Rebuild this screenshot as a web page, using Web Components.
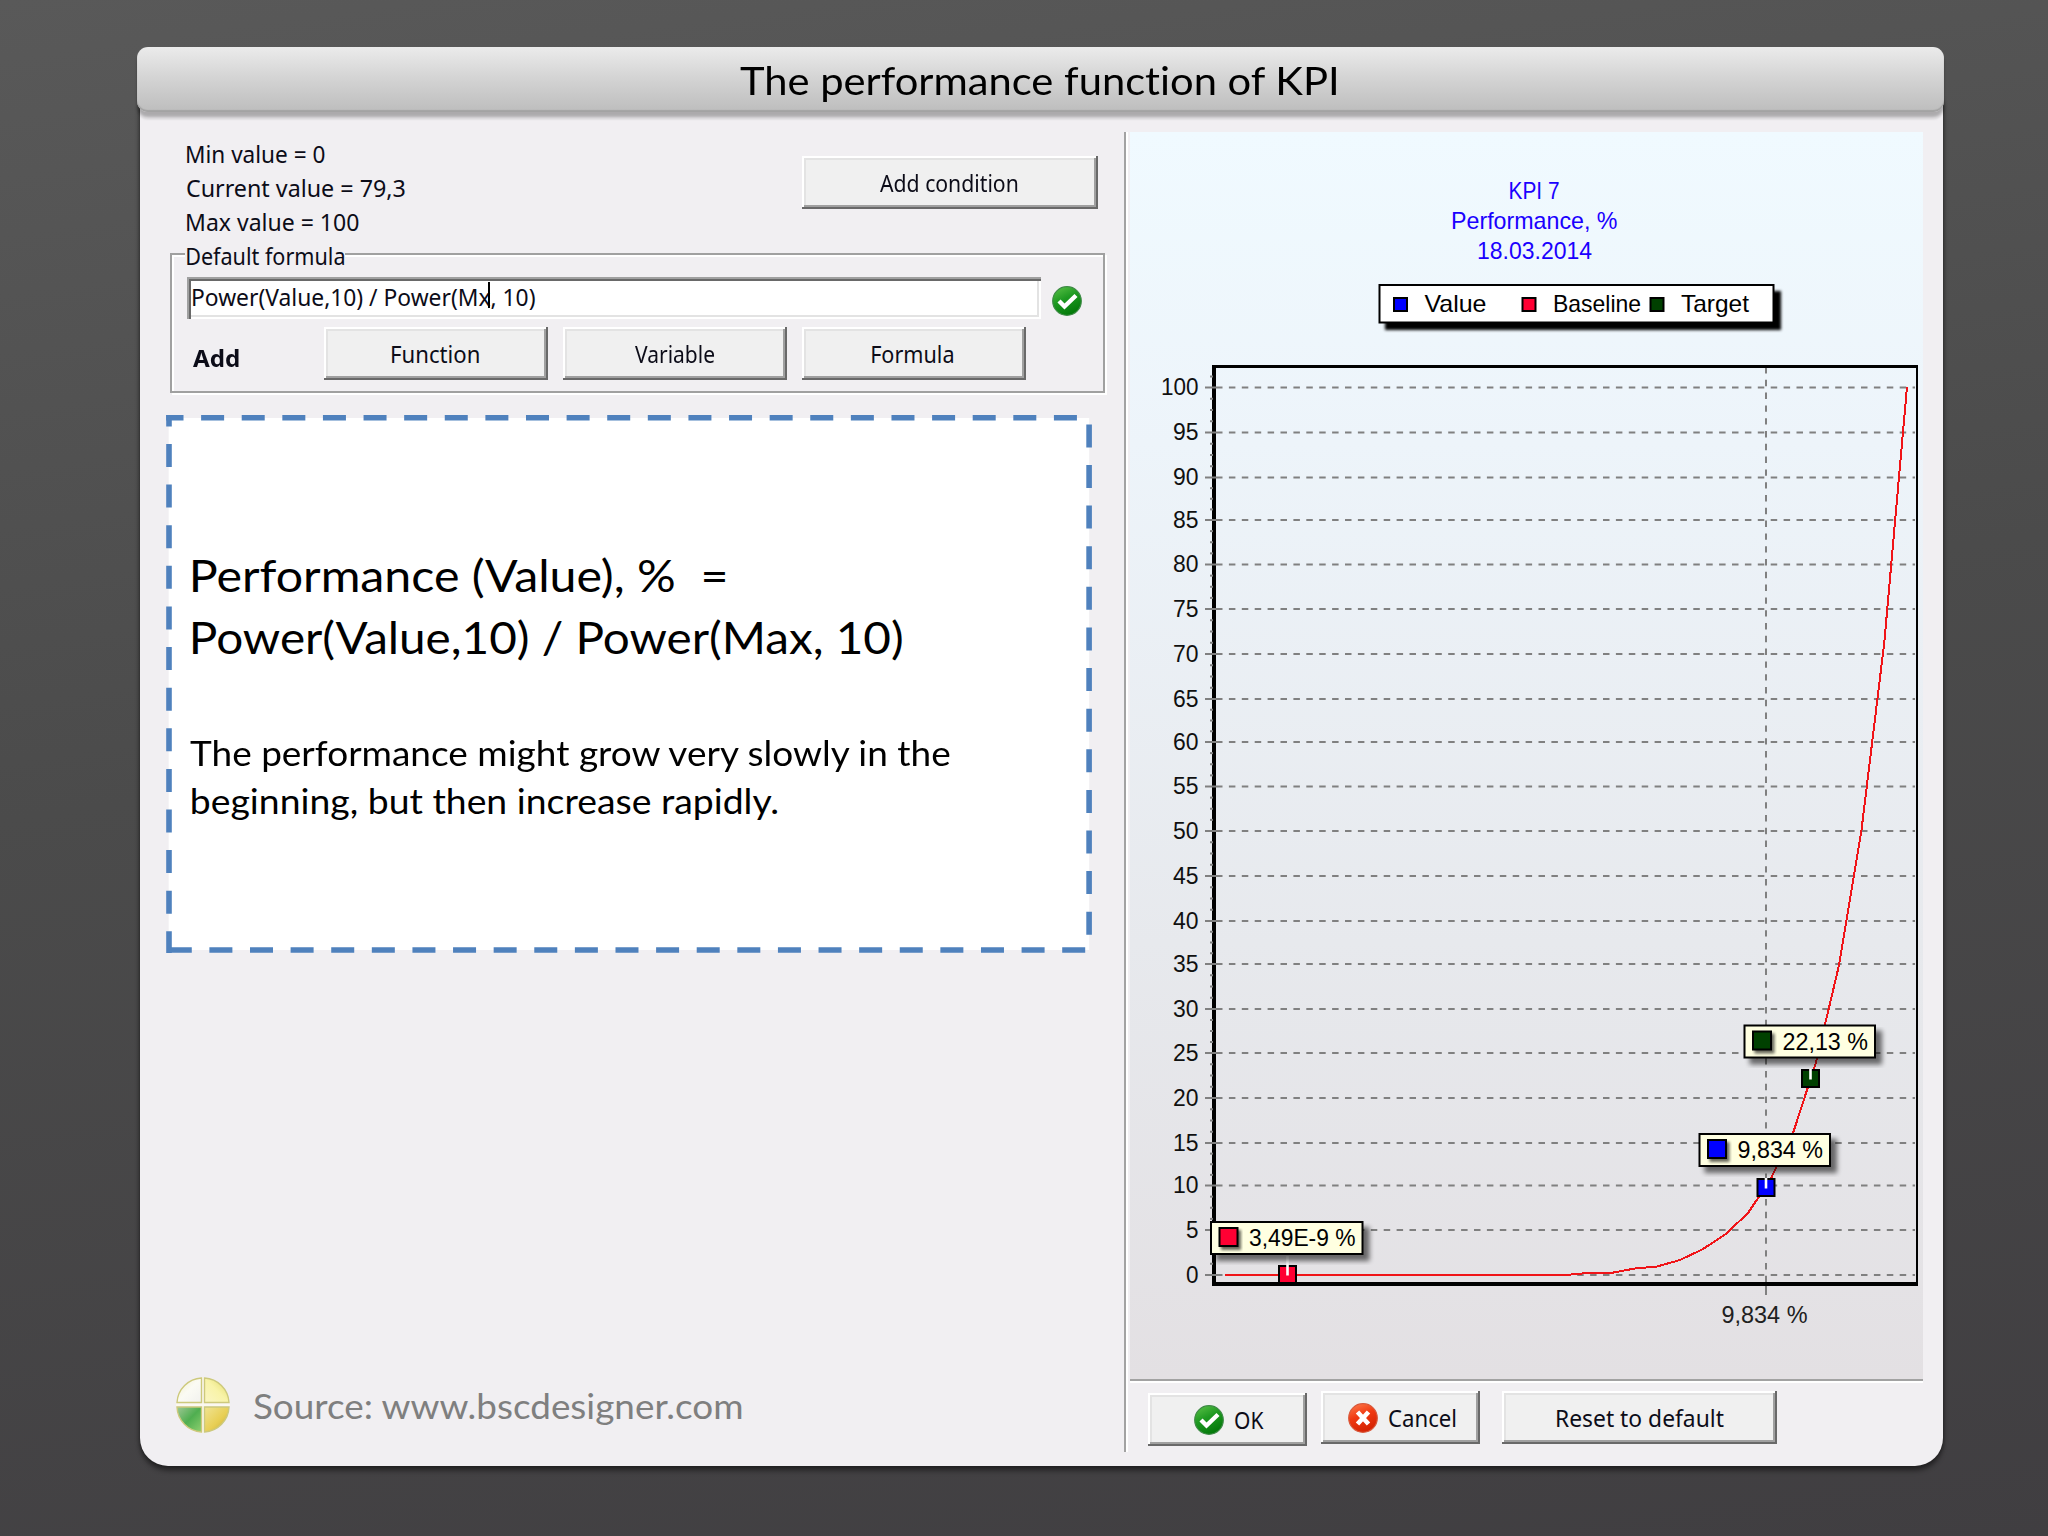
<!DOCTYPE html>
<html lang="en">
<head>
<meta charset="utf-8">
<title>The performance function of KPI</title>
<style>
    body
    {
        margin: 0;
        width: 2048px;
        height: 1536px;
        overflow: hidden;
        display: flex;
        flex-direction: column;
        background: linear-gradient(172deg, #595959 0%, #4b4b4b 45%, #403e41 100%);
        color: #000;
        font-variant-ligatures: none;
    }
</style>
</head>
<body>

<slide-header><fit-text width="598">The performance function of KPI</fit-text></slide-header>

<slide-panel>
    <formula-editor slot="editor"></formula-editor>
    <formula-note slot="editor"></formula-note>
    <source-line slot="editor"><fit-text width="488">Source: www.bscdesigner.com</fit-text></source-line>
    <kpi-chart slot="chart"></kpi-chart>
    <dialog-buttons slot="chart"></dialog-buttons>
</slide-panel>

<script>
(function() {

function define(name, html, setup)
{
    const template = document.createElement('template');
    template.innerHTML = html.trim();

    customElements.define(name, class extends HTMLElement
    {
        constructor()
        {
            super();
            this.dom = this.attachShadow({mode: 'open'});
            this.dom.appendChild(template.content.cloneNode(true));
        }

        connectedCallback()
        {
            if (setup) setup(this);
        }
    });
}

define('slide-header', `
    <style>
        :host
        {
            position: relative;
            z-index: 1;
            display: flex;
            justify-content: center;
            flex: none;
            box-sizing: border-box;
            width: 1807px;
            height: 65px;
            margin: 47px 0 0 137px;
            padding-right: 3px;
            border-radius: 11px;
            background: linear-gradient(#ebebeb, #d5d5d5 45%, #bdbdbd);
            box-shadow: inset 0 -2px 1px #a3a3a3, 0 5px 3px rgba(0, 0, 0, .24), 0 8px 2px rgba(0, 0, 0, .06);
            font-family: Lato, sans-serif;
            font-size: 39.2px;
            line-height: 65px;
        }
    </style>
    <slot></slot>
`);

define('slide-panel', `
    <style>
        :host
        {
            display: grid;
            grid-template-columns: 984px 1fr;
            flex: none;
            box-sizing: border-box;
            width: 1803px;
            height: 1366px;
            margin: -12px 0 0 140px;
            padding-top: 32px;
            border-radius: 0 0 28px 28px;
            background: #f1eff2;
            box-shadow: 0 5px 5px rgba(0, 0, 0, .4), 0 0 4px rgba(0, 0, 0, .4);
        }
        .editor { display: flex; flex-direction: column; }
        .chart
        {
            display: flex;
            flex-direction: column;
            height: 1320px;
            border-left: 2px solid #a2a2a2;
            box-shadow: inset 2px 0 #fff;
            padding-left: 4px;
        }
    </style>
    <div class="editor"><slot name="editor"></slot></div>
    <div class="chart"><slot name="chart"></slot></div>
`);

define('win-button', `
    <style>
        :host
        {
            display: flex;
            justify-content: center;
            align-items: center;
            gap: 11px;
            flex: none;
            box-sizing: border-box;
            width: 224px;
            height: 53px;
            padding-right: 2px;
            background: #f0f0f0;
            box-shadow: inset -2px -2px #696969, inset 2px 2px #fff, inset -4px -4px #a0a0a0, inset 4px 4px #e3e3e3;
            font-family: "Noto Sans", sans-serif;
            font-size: 23.3px;
            line-height: 34px;
            color: #0c0c18;
        }
    </style>
    <slot></slot>
`);

define('status-icon', `
    <style>
        :host { display: block; flex: none; width: 30px; height: 30px; }
        svg { display: block; }
        .cancel, :host([type="cancel"]) .ok { display: none; }
        :host([type="cancel"]) .cancel { display: inline; }
    </style>
    <svg width="30" height="30" viewBox="0 0 30 30">
        <defs>
            <linearGradient id="green" x1="0" y1="0" x2="0.5" y2="1">
                <stop offset="0" stop-color="#5fc44a"/>
                <stop offset=".5" stop-color="#1f9a22"/>
                <stop offset="1" stop-color="#047a0a"/>
            </linearGradient>
            <linearGradient id="red" x1="0" y1="0" x2="0.4" y2="1">
                <stop offset="0" stop-color="#ff8050"/>
                <stop offset=".5" stop-color="#f03a12"/>
                <stop offset="1" stop-color="#d62404"/>
            </linearGradient>
        </defs>
        <g class="ok">
            <circle cx="15" cy="15" r="14.3" fill="url(#green)" stroke="#3d8a45" stroke-width="1.2"/>
            <path d="M7 15 L12.5 20.5 L24 9.5" fill="none" stroke="#fff" stroke-width="4.4"/>
        </g>
        <g class="cancel">
            <circle cx="15" cy="15" r="14.3" fill="url(#red)" stroke="#d8583a" stroke-width="1.2"/>
            <path d="M9.5 9 L20.5 21 M20.5 9 L9.5 21" stroke="#fff" stroke-width="4.6"/>
        </g>
    </svg>
`);

define('group-box', `
    <style>
        :host
        {
            display: block;
            box-sizing: border-box;
            width: 935px;
            height: 140px;
            border: 2px solid #a0a0a0;
            box-shadow: inset 2px 2px #fff, 2px 2px #fff;
        }
        .label
        {
            width: fit-content;
            height: 34px;
            margin: -16px 0 0 13px;
            padding: 0 0 0 2px;
            background: #f1eff2;
        }
    </style>
    <div class="label"><slot name="label"></slot></div>
    <slot></slot>
`);

define('formula-editor', `
    <style>
        :host
        {
            display: block;
            flex: none;
            box-sizing: border-box;
            height: 283px;
            padding: 5px 0 0 30px;
            font-family: "Noto Sans", sans-serif;
            font-size: 23.3px;
            line-height: 34px;
            color: #0c0c18;
        }
        .top { display: flex; justify-content: space-between; width: 928px; height: 116px; }
        .values { display: flex; flex-direction: column; padding-left: 17px; }
        .top win-button { width: 296px; margin-top: 19px; }
        .input-row { display: flex; gap: 11px; margin: 4px 0 0 15px; }
        .input
        {
            position: relative;
            box-sizing: border-box;
            width: 854px;
            height: 42px;
            padding: 3px 0 0 6px;
            background: #fff;
            box-shadow: inset 2px 2px #a0a0a0, inset 4px 4px #696969, inset -2px -2px #fff, inset -4px -4px #e3e3e3;
        }
        .caret { position: absolute; left: 301px; top: 5px; width: 2px; height: 26px; background: #000; }
        .input-row status-icon { margin-top: 9px; }
        .add-row { display: flex; gap: 15px; margin: 8px 0 0 21px; }
        .add { width: 116px; padding-top: 14px; font-weight: bold; }
    </style>
    <div class="top">
        <div class="values">
            <fit-text width="138">Min value = 0</fit-text>
            <fit-text width="217.5">Current value = 79,3</fit-text>
            <fit-text width="172">Max value = 100</fit-text>
        </div>
        <win-button><fit-text width="137.5">Add condition</fit-text></win-button>
    </div>
    <group-box>
        <fit-text slot="label" width="157.5">Default formula</fit-text>
        <div class="input-row">
            <div class="input">
                <fit-text width="342.5">Power(Value,10) / Power(Mx, 10)</fit-text>
                <i class="caret"></i>
            </div>
            <status-icon></status-icon>
        </div>
        <div class="add-row">
            <div class="add"><fit-text width="46.5">Add</fit-text></div>
            <win-button><fit-text width="87">Function</fit-text></win-button>
            <win-button><fit-text width="79">Variable</fit-text></win-button>
            <win-button><fit-text width="81.5">Formula</fit-text></win-button>
        </div>
    </group-box>
`);

define('formula-note', `
    <style>
        :host
        {
            display: grid;
            flex: none;
            width: 926px;
            height: 538px;
            margin-left: 26px;
            font-family: Lato, sans-serif;
        }
        svg, .text { grid-area: 1 / 1; }
        .text { display: flex; flex-direction: column; padding: 129px 0 0 24px; }
        .big { margin-left: 3px; font-size: 45.4px; line-height: 61.5px; }
        .small { font-size: 34.2px; line-height: 48px; }
        .big + .small { margin-top: 61.5px; }
        .small + .small { margin-left: 2px; }
    </style>
    <svg width="926" height="538" viewBox="166.3 415 926 538">
        <rect x="169" y="418" width="920.5" height="532" fill="#fff"/>
        <g fill="none" stroke="#4f81bd" stroke-width="5.6" stroke-dasharray="23 17.61">
            <path d="M166.5 417.8 H1092" stroke-dashoffset="5.7"/>
            <path d="M1089.4 424.4 V950"/>
            <path d="M1085.5 950 H166.5"/>
            <path d="M169.3 415 V953" stroke-dashoffset="11.6"/>
        </g>
    </svg>
    <div class="text">
        <fit-text class="big" width="532">Performance (Value), %  =</fit-text>
        <fit-text class="big" width="709.5">Power(Value,10) / Power(Max, 10)</fit-text>
        <fit-text class="small" width="763">The performance might grow very slowly in the</fit-text>
        <fit-text class="small" width="586">beginning, but then increase rapidly.</fit-text>
    </div>
`);

define('source-line', `
    <style>
        :host
        {
            display: flex;
            gap: 24px;
            margin: 424px 0 0 36px;
            font-family: Lato, sans-serif;
            font-size: 34.2px;
            line-height: 58px;
            color: #7f7f7f;
        }
        svg { flex: none; }
    </style>
    <svg width="54" height="56" viewBox="0 0 54 56">
        <defs>
            <linearGradient id="pale" x1="0" y1="0" x2="1" y2="1">
                <stop offset="0" stop-color="#f0eecb"/>
                <stop offset=".5" stop-color="#fbfbf4"/>
                <stop offset="1" stop-color="#f1f1ee"/>
            </linearGradient>
            <linearGradient id="lemon" x1="0" y1="1" x2="1" y2="0">
                <stop offset="0" stop-color="#faf6c4"/>
                <stop offset=".5" stop-color="#f8f3a8"/>
                <stop offset="1" stop-color="#e0d760"/>
            </linearGradient>
            <linearGradient id="leaf" x1="0" y1="0" x2="1" y2="1">
                <stop offset="0" stop-color="#a0c896"/>
                <stop offset=".5" stop-color="#4fae50"/>
                <stop offset="1" stop-color="#8fd070"/>
            </linearGradient>
            <linearGradient id="gold" x1="0" y1="0" x2="1" y2="1">
                <stop offset="0" stop-color="#f0e494"/>
                <stop offset=".55" stop-color="#e8cf55"/>
                <stop offset="1" stop-color="#c0a838"/>
            </linearGradient>
        </defs>
        <path d="M27 0 V56 M0 27.8 H54" stroke="#fbf8f0" stroke-width="3"/>
        <g stroke="#cdc97c" stroke-width="1.4">
            <path d="M25.5 1 V25.5 H1 A26 26 0 0 1 25.5 1Z" fill="url(#pale)"/>
            <path d="M28.5 1 V25.5 H53 A26 26 0 0 0 28.5 1Z" fill="url(#lemon)"/>
            <path d="M25.5 55 V30 H1 A26 26 0 0 0 25.5 55Z" fill="url(#leaf)"/>
            <path d="M28.5 55 V30 H53 A26 26 0 0 1 28.5 55Z" fill="url(#gold)"/>
        </g>
    </svg>
    <slot></slot>
`);

define('dialog-buttons', `
    <style>
        :host
        {
            display: flex;
            align-items: flex-start;
            width: 793px;
            box-sizing: border-box;
            border-top: 2px solid #a2a2a2;
            box-shadow: inset 0 2px #fff;
            padding: 10px 0 0 18px;
        }
        win-button { width: 159px; padding: 1px 0 0 2px; }
        .ok { margin: 2px 14px 0 0; }
        .reset { width: 275px; margin-left: 22px; }
    </style>
    <win-button class="ok"><status-icon></status-icon><fit-text width="29">OK</fit-text></win-button>
    <win-button><status-icon type="cancel"></status-icon><fit-text width="67">Cancel</fit-text></win-button>
    <win-button class="reset"><fit-text width="166.5">Reset to default</fit-text></win-button>
`);

// plot area and scales
const left = 1212, right = 1918, top = 365, bottom = 1286;
const rows = [1275, 1230, 1185.5, 1143, 1098, 1053, 1009, 964, 921, 876, 831,
              786.5, 742, 699, 654, 609, 564.5, 520, 477.5, 432.5, 387.5];
const xOf = (value) => 1225 + 6.82 * value;
const yOf = (percent) => 1275 - 2.13 * Math.round(8.875 * percent / 2.13);

function text(x, y, width, string, extra = '')
{
    return `<text x="${x - 1}" y="${y}" textLength="${width + 2}" lengthAdjust="spacingAndGlyphs" ${extra}>${string}</text>`;
}

function box(x, y, w, h, fill)
{
    return `<rect x="${x + 1}" y="${y + 1}" width="${w - 2}" height="${h - 2}" fill="${fill}" stroke="#000" stroke-width="2"/>`;
}

function drawGrid()
{
    let out = '';
    rows.forEach((y, i) =>
    {
        out += `<path d="M1216 ${y} H1915" stroke-dasharray="6.5 6.4"/><path d="M1205 ${y} H1216"/>`;
        out += text(i == 20 ? 1162 : i < 2 ? 1187 : 1174, y + 7.9, i == 20 ? 35.5 : i < 2 ? 10.5 : 23.5, i * 5, 'fill="#101010" stroke="none"');

        const step = i < 20 ? (rows[i + 1] - y) / 4 : -11;
        for (let k = 1; k < (i < 20 ? 4 : 2); k++)
        {
            out += `<path d="M1210 ${y + step * k} H1213"/>`;
        }
    });
    out += `<path d="M1766 368 V1283" stroke-dasharray="6.4 6.4" stroke-dashoffset="1"/><path d="M1766 1283 V1295"/>`;
    return out;
}

function drawCurve()
{
    const points = [];
    for (let i = 0; i <= 30; i++)
    {
        const v = i * 100 / 30;
        points.push(xOf(v).toFixed(1) + ',' + yOf(100 * Math.pow(v / 100, 10)).toFixed(1));
    }
    return `<polyline points="${points.join(' ')}" fill="none" stroke="#f01418" stroke-width="2" shape-rendering="crispEdges"/>`;
}

function drawMark(x, y, w, fill, label, mx, my, lineTop)
{
    return box(mx - 9.5, my, 19, 19, fill)
        + `<path d="M${mx} ${lineTop} V${my + 10.5}" stroke="#fff" stroke-width="2.6"/>`
        + `<rect x="${x + 6}" y="${y + 6}" width="${w}" height="34" fill="#000" opacity=".55" filter="url(#soft)"/>`
        + box(x, y, w, 34, '#ffffe1')
        + `<rect x="${x + 11}" y="${y + 9}" width="20" height="20" fill="#000" opacity=".6" filter="url(#soft1)"/>`
        + box(x + 8.5, y + 6, 20, 20, fill)
        + text(x + 40, y + 25.2, w - 49, label);
}

function drawLegend()
{
    let out = `<rect x="1385" y="291" width="396" height="39" fill="#000" filter="url(#soft1)"/>` + box(1378.5, 284, 396, 39.5, '#fff');
    [[1393, '#0000ff', 'Value', 60], [1521.5, '#ff0033', 'Baseline', 86], [1649.5, '#004000', 'Target', 66]].forEach((s) =>
    {
        out += box(s[0], 297, 15, 15, s[1]) + text(s[0] + 32.5, 311.8, s[3], s[2]);
    });
    return out;
}

define('kpi-chart', `
    <style>
        :host { display: block; width: 793px; height: 1247px; flex: none; }
        svg { display: block; font-family: "Liberation Sans", Arial, sans-serif; font-size: 23.6px; }
    </style>
    <svg width="793" height="1247" viewBox="1130 132 793 1247"></svg>
`, (el) =>
{
    el.dom.querySelector('svg').innerHTML = `
        <defs>
            <linearGradient id="sky" x1="0" y1="0" x2="0" y2="1">
                <stop offset="0" stop-color="#f0faff"/>
                <stop offset=".25" stop-color="#edf4fa"/>
                <stop offset=".65" stop-color="#e7e9ed"/>
                <stop offset="1" stop-color="#e3e0e3"/>
            </linearGradient>
            <filter id="soft"><feGaussianBlur stdDeviation="2.6"/></filter>
            <filter id="soft1"><feGaussianBlur stdDeviation="1.6"/></filter>
        </defs>
        <rect x="1130" y="132" width="793" height="1247" fill="url(#sky)"/>
        <g fill="#1a00ff">
            ${text(1509.5, 199, 49, 'KPI 7')}
            ${text(1452, 229, 164.5, 'Performance, %')}
            ${text(1478, 259, 113, '18.03.2014')}
        </g>
        ${drawLegend()}
        <path d="M${left} ${top + 1.5} H${right}" stroke="#000" stroke-width="3"/>
        <path d="M${right - 1} ${top} V${bottom}" stroke="#000" stroke-width="2"/>
        <path d="M${left + 2} ${top} V${bottom}" stroke="#000" stroke-width="4"/>
        <g fill="none" stroke="#808080" stroke-width="2">${drawGrid()}</g>
        ${drawCurve()}
        ${drawMark(1743.5, 1024.5, 132.5, '#004000', '22,13 %', 1810.5, 1069, 1069)}
        ${drawMark(1698.5, 1133, 132.5, '#0000ff', '9,834 %', 1766, 1178, 1178)}
        ${drawMark(1210, 1221, 153.5, '#ff0033', '3,49E-9 %', 1287.5, 1265, 1256)}
        <path d="M${left} ${bottom - 2} H${right}" stroke="#000" stroke-width="4"/>
        ${text(1722.5, 1322.7, 84, '9,834 %', 'fill="#202020"')}
    `;
});

const canvas = document.createElement('canvas').getContext('2d');

// single line of text, stretched so that its ink is exactly [width] wide;
// defined last, the font it measures comes from the elements around it
define('fit-text', `
    <style>
        :host { display: inline-block; flex: none; vertical-align: top; }
        span { display: inline-block; white-space: pre; transform-origin: 0 50%; }
    </style>
    <span><slot></slot></span>
`, (el) =>
{
    const style = getComputedStyle(el);
    canvas.font = style.fontWeight + ' ' + style.fontSize + ' ' + style.fontFamily;
    const m = canvas.measureText(el.textContent);
    const width = parseFloat(el.getAttribute('width'));
    const scale = width / (m.actualBoundingBoxLeft + m.actualBoundingBoxRight);
    const shift = m.actualBoundingBoxLeft * scale;

    el.style.width = width + 'px';
    el.dom.querySelector('span').style.transform = `translateX(${shift}px) scaleX(${scale})`;
});

})();
</script>

</body>
</html>
